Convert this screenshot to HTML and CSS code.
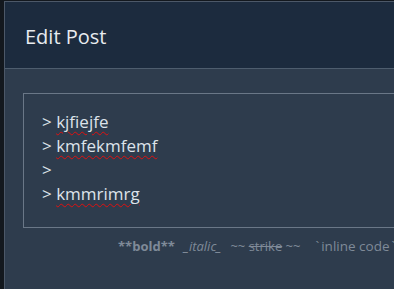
FILE: index.html
```html
<!DOCTYPE html>
<html>
<head>
<meta charset="utf-8">
<link rel="stylesheet" href="styles.css">
</head>
<body>
<div class="modal">
  <div class="modal-header">
    <h2 class="modal-title">Edit Post</h2>
  </div>
  <div class="modal-body">
    <div class="editor">
      <div class="line">&gt; <span class="misspelled">kjfiejfe</span></div>
      <div class="line">&gt; <span class="misspelled">kmfekmfemf</span></div>
      <div class="line">&gt;</div>
      <div class="line">&gt; <span class="misspelled">kmmrimrg</span></div>
    </div>
    <div class="hints">
      <span class="hint"><b>**bold**</b></span>
      <span class="hint"><i>_italic_</i></span>
      <span class="hint">~~ <s>strike</s> ~~</span>
      <span class="hint code"><span class="tick">`</span>inline code<span class="tick">`</span></span>
    </div>
  </div>
</div>
</body>
</html>
```
FILE: styles.css
```css
html, body {
  margin: 0;
  padding: 0;
  width: 394px;
  height: 289px;
  overflow: hidden;
  background: #13181e;
  font-family: "Open Sans", "Noto Sans", sans-serif;
}
.modal {
  margin: 1px 0 0 4px;
  width: 389px;
  height: 287px;
  border: 1px solid #4c5868;
  border-right: none;
  border-bottom: none;
  background: #2e3c4d;
  overflow: hidden;
}
.modal-header {
  height: 67px;
  background: #1c2b3e;
  border-bottom: 1px solid #4e5d6e;
  display: flex;
  align-items: center;
  padding: 2px 0 0 20px;
  box-sizing: border-box;
}
.modal-title {
  margin: 0;
  font-weight: 400;
  font-size: 20px;
  color: #e8ecf0;
}
.modal-body {
  padding: 24px 0 0 18px;
}
.editor {
  border: 1px solid #6a7787;
  border-right: none;
  padding: 16px 18px 21px 18px;
  color: #dde3ea;
  font-size: 17px;
  line-height: 24px;
}
.misspelled {
  text-decoration: underline wavy #e01010;
  text-decoration-thickness: 1px;
  text-underline-offset: 3px;
}
.hints {
  display: flex;
  gap: 9px;
  padding: 9px 0 0 95px;
  font-size: 13px;
  color: #7f8a98;
  white-space: nowrap;
}
.hint b { font-weight: 700; }
.hint i { font-style: italic; }
.code { margin-left: 4px; font-size: 13.5px; }
.tick { margin: 0 2px; }
```
